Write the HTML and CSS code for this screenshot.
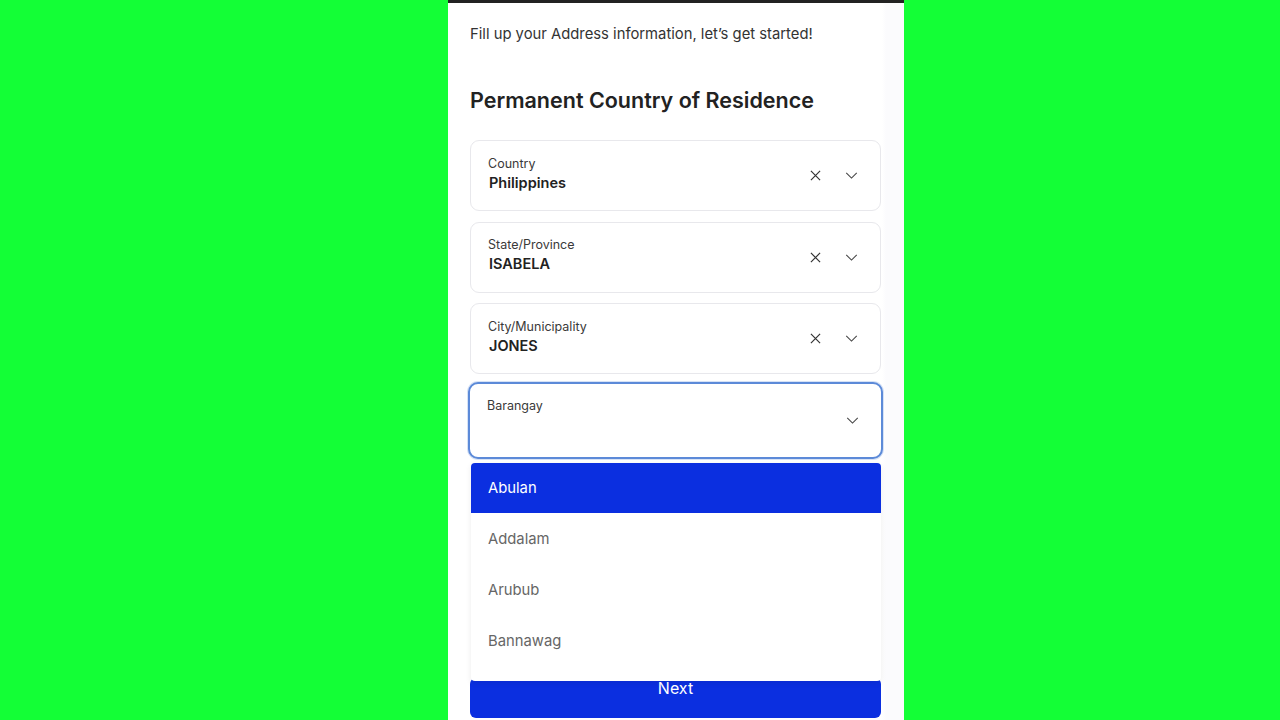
FILE: index.html
```html
<!DOCTYPE html>
<html>
<head>
<meta charset="utf-8">
<link rel="stylesheet" href="styles.css">
</head>
<body>
<div class="phone">
  <div class="topbar"></div>
  <div class="content">
    <p class="subtitle">Fill up your Address information, let’s get started!</p>
    <h2 class="heading">Permanent Country of Residence</h2>
    <div class="fields">
      <div class="field">
        <div class="field-text">
          <span class="label">Country</span>
          <span class="value">Philippines</span>
        </div>
        <div class="icons">
          <svg class="ic-x" viewBox="0 0 12 12"><path d="M1 1L11 11M11 1L1 11"/></svg>
          <svg class="ic-chev" viewBox="0 0 14 8"><path d="M1 1L7 7L13 1"/></svg>
        </div>
      </div>
      <div class="field">
        <div class="field-text">
          <span class="label">State/Province</span>
          <span class="value">ISABELA</span>
        </div>
        <div class="icons">
          <svg class="ic-x" viewBox="0 0 12 12"><path d="M1 1L11 11M11 1L1 11"/></svg>
          <svg class="ic-chev" viewBox="0 0 14 8"><path d="M1 1L7 7L13 1"/></svg>
        </div>
      </div>
      <div class="field">
        <div class="field-text">
          <span class="label">City/Municipality</span>
          <span class="value">JONES</span>
        </div>
        <div class="icons">
          <svg class="ic-x" viewBox="0 0 12 12"><path d="M1 1L11 11M11 1L1 11"/></svg>
          <svg class="ic-chev" viewBox="0 0 14 8"><path d="M1 1L7 7L13 1"/></svg>
        </div>
      </div>
      <div class="field-wrap">
        <div class="field focused">
          <div class="field-text">
            <span class="label">Barangay</span>
            <span class="value">&nbsp;</span>
          </div>
          <div class="icons">
            <svg class="ic-chev" viewBox="0 0 14 8"><path d="M1 1L7 7L13 1"/></svg>
          </div>
        </div>
        <ul class="menu">
          <li class="opt selected">Abulan</li>
          <li class="opt">Addalam</li>
          <li class="opt">Arubub</li>
          <li class="opt">Bannawag</li>
        </ul>
      </div>
    </div>
    <button class="next">Next</button>
  </div>
</div>
</body>
</html>
```
FILE: styles.css
```css
html, body {
  margin: 0;
  padding: 0;
  height: 720px;
  overflow: hidden;
  background: #13ff36;
  font-family: Inter, "Open Sans", "Liberation Sans", sans-serif;
}
.phone {
  margin-left: 448px;
  width: 456px;
  height: 720px;
  background: linear-gradient(to right, #ffffff 0, #ffffff 434px, #fbfbfd 438px, #fbfbfd 456px);
  position: relative;
  overflow: hidden;
}
.topbar {
  height: 3px;
  background: #222;
}
.content {
  padding: 0 23px 0 22px;
}
.subtitle {
  margin: 20px 0 0;
  font-size: 14.8px;
  line-height: 22px;
  color: #333;
  letter-spacing: 0;
}
.heading {
  margin: 40px 0 0;
  font-size: 21.5px;
  line-height: 30px;
  font-weight: 600;
  color: #222;
  letter-spacing: 0;
}
.fields {
  margin-top: 25px;
  display: flex;
  flex-direction: column;
  gap: 10.5px;
}
.field {
  height: 71px;
  box-sizing: border-box;
  border: 1px solid #e8e8ec;
  border-radius: 9px;
  display: flex;
  align-items: center;
  justify-content: space-between;
  padding: 0 22px 0 17px;
  background: #fff;
}
.field-text {
  display: flex;
  flex-direction: column;
  gap: 1px;
  margin-top: -3px;
}
.label {
  font-size: 12.5px;
  line-height: 16px;
  color: #3a3a3a;
}
.value {
  font-size: 14.5px;
  line-height: 20px;
  font-weight: 600;
  color: #222;
  padding-left: 1px;
}
.icons {
  display: flex;
  align-items: center;
  gap: 24px;
}
.ic-x {
  width: 11px;
  height: 11px;
  fill: none;
  stroke: #333;
  stroke-width: 1.3;
}
.ic-chev {
  width: 13px;
  height: 7px;
  fill: none;
  stroke: #444;
  stroke-width: 1.2;
}
.field-wrap {
  position: relative;
  margin-top: -2.5px;
}
.field.focused {
  height: 76.5px;
  margin: 0 -2px;
  border: 2.5px solid #5c8ad8;
  border-radius: 10px;
  box-shadow: 0 0 0 1px #d6e2f6;
  padding: 0 22px 0 17px;
}
.field.focused .field-text {
  margin-top: -1px;
  gap: 8px;
}
.menu {
  position: absolute;
  left: 1px;
  right: 0;
  top: 81px;
  margin: 0;
  padding: 0;
  list-style: none;
  background: #fff;
  border-radius: 4px;
  box-shadow: 0 2px 6px rgba(0,0,0,0.08);
  z-index: 5;
  overflow: hidden;
  height: 218px;
}
.opt {
  height: 51px;
  display: flex;
  align-items: center;
  padding-left: 17px;
  font-size: 14.8px;
  color: #666;
}
.opt.selected {
  background: #0b2fe0;
  color: #fff;
  height: 50px;
}
.next {
  display: block;
  width: 100%;
  margin-top: 219px;
  height: 40px;
  border: none;
  border-radius: 6px;
  background: #0b2fe0;
  color: #fff;
  font-family: inherit;
  font-size: 16px;
  padding: 0 0 22px;
}
```
